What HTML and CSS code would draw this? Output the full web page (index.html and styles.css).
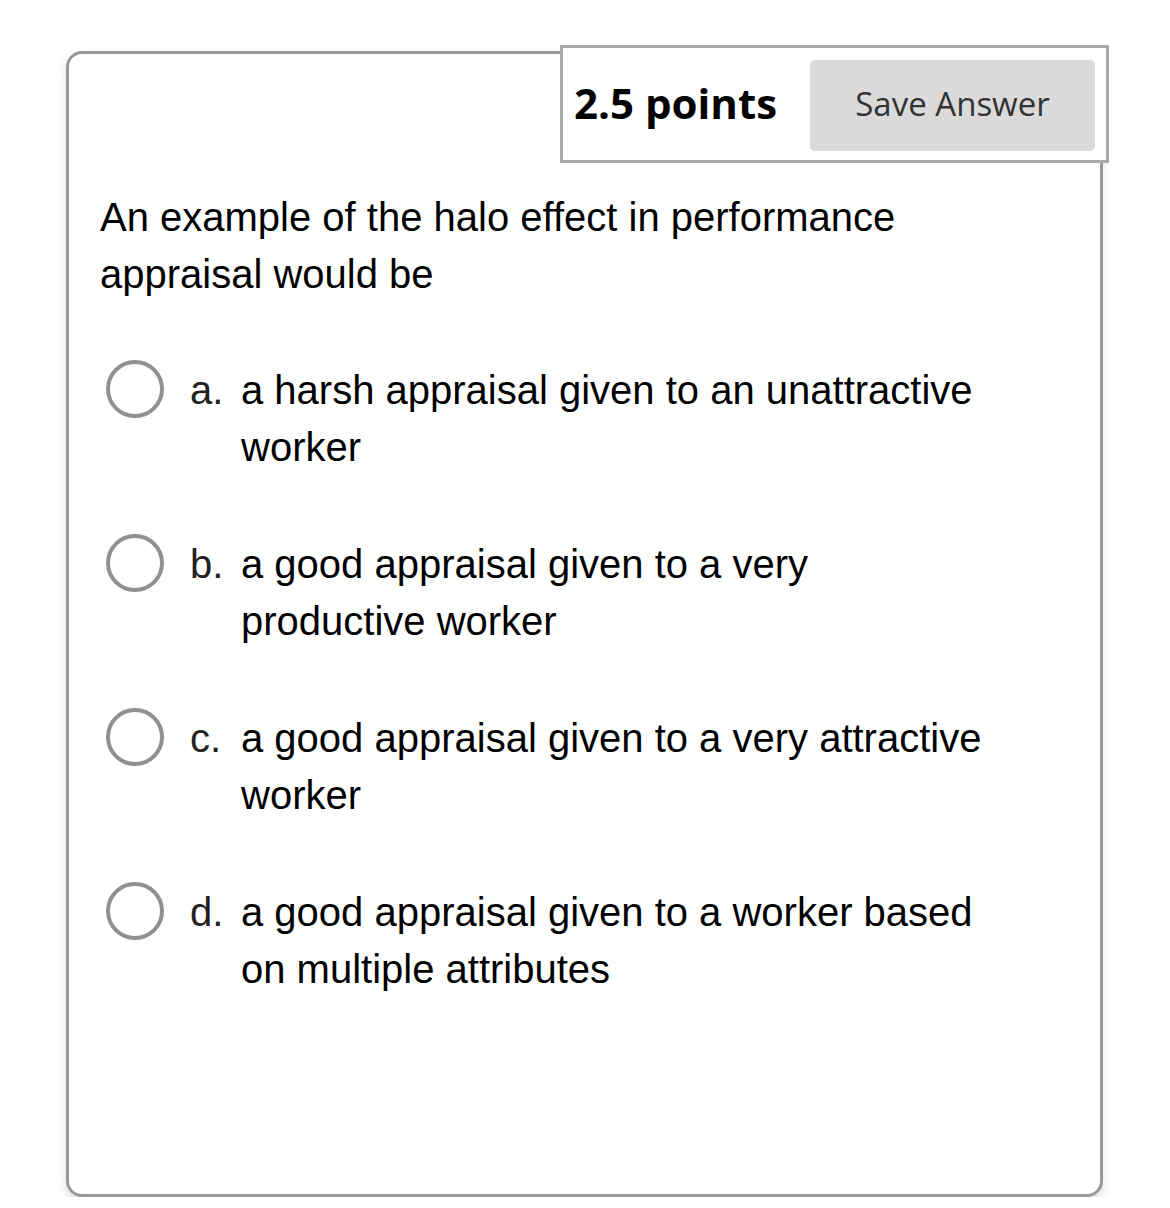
FILE: index.html
```html
<!DOCTYPE html>
<html lang="en">
<head>
    <meta charset="UTF-8">
    <meta name="viewport" content="width=device-width, initial-scale=1.0">
    <title>Question</title>
    <link rel="stylesheet" href="styles.css">
</head>
<body>

<div class="question-card">
    <div class="points-box">
        <span class="points">2.5 points</span>
        <button class="save-button">Save Answer</button>
    </div>

    <p class="question-text">An example of the halo effect in performance appraisal would be</p>

    <div class="answers">
        <label class="answer">
            <span class="radio"></span>
            <span class="answer-letter">a.</span>
            <span class="answer-text">a harsh appraisal given to an unattractive worker</span>
        </label>
        <label class="answer">
            <span class="radio"></span>
            <span class="answer-letter">b.</span>
            <span class="answer-text">a good appraisal given to a very productive worker</span>
        </label>
        <label class="answer">
            <span class="radio"></span>
            <span class="answer-letter">c.</span>
            <span class="answer-text">a good appraisal given to a very attractive worker</span>
        </label>
        <label class="answer">
            <span class="radio"></span>
            <span class="answer-letter">d.</span>
            <span class="answer-text">a good appraisal given to a worker based on multiple attributes</span>
        </label>
    </div>
</div>

</body>
</html>
```

FILE: styles.css
```css
body {
    margin: 0;
    background-color: #fff;
    color: #000;
    font-family: "Liberation Sans", Arial, Helvetica, sans-serif;
}
.question-card {
    position: relative;
    box-sizing: border-box;
    width: 1037px;
    margin: 51px 0 0 66px;
    padding: 135px 108px 196px 31px;
    border: 3px solid #999;
    border-radius: 16px;
    background-color: #fff;
    box-shadow: 0 4px 10px rgba(0, 0, 0, 0.14);
}
.points-box {
    position: absolute;
    top: -9px;
    right: -9px;
    box-sizing: border-box;
    width: 549px;
    height: 118px;
    display: flex;
    align-items: center;
    justify-content: space-between;
    padding: 12px 11px 9px 11px;
    border: 3px solid #aaa;
    background-color: #fff;
}
.points {
    margin-bottom: 6px;
    font-family: "Open Sans", "Noto Sans", sans-serif;
    font-weight: 700;
    font-size: 42px;
    color: #000;
    white-space: nowrap;
}
.save-button {
    width: 285px;
    height: 91px;
    padding: 0 0 4px;
    border: none;
    border-radius: 5px;
    background-color: #dadada;
    color: #333;
    font-family: "Open Sans", "Noto Sans", sans-serif;
    font-size: 33px;
    cursor: pointer;
}
.question-text {
    margin: 0 0 59px;
    font-size: 40px;
    line-height: 57px;
}
.answers {
    display: flex;
    flex-direction: column;
    gap: 60px;
}
.answer {
    display: flex;
    align-items: flex-start;
    font-size: 40px;
    line-height: 57px;
    cursor: pointer;
}
.radio {
    flex: none;
    box-sizing: border-box;
    width: 58px;
    height: 58px;
    margin: -2px 26px 0 6px;
    border: 4px solid #909090;
    border-radius: 50%;
}
.answer-letter {
    flex: none;
    width: 51px;
    color: #222;
}
.answer-text {
    flex: 1;
}
```
